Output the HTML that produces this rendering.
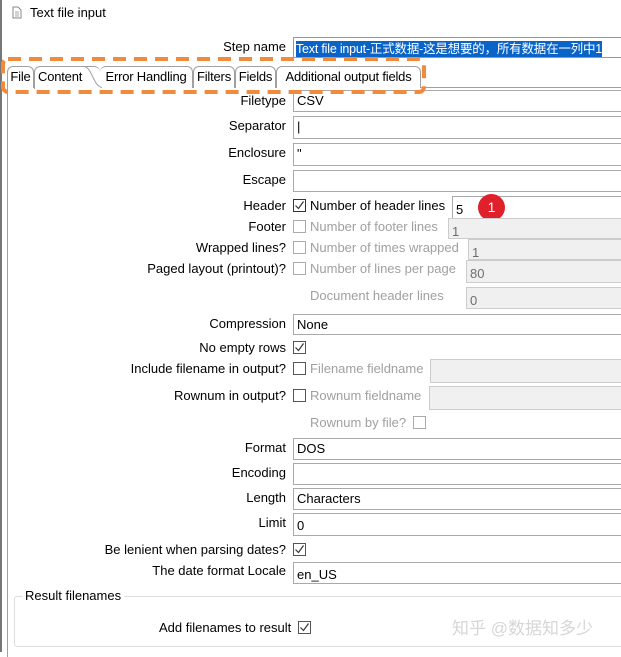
<!DOCTYPE html>
<html><head><meta charset="utf-8"><style>
*{margin:0;padding:0;box-sizing:border-box}
body{width:621px;height:652px;background:#fff;position:relative;overflow:hidden;font-family:"Liberation Sans","Noto Sans CJK SC",sans-serif;font-size:13px;color:#000}
.a{position:absolute;white-space:nowrap}
.l{position:absolute;right:335px;white-space:nowrap;text-align:right;margin-top:1px}
.in{position:absolute;border:1px solid #a9a9a9;background:#fff;padding-left:3px;line-height:19px;white-space:nowrap;right:-2px}
.dis{background:#f0f0f0;border-color:#ccc;color:#6d6d6d}
.cb{position:absolute;width:13px;height:13px;border:1px solid #333;background:#fff}
.cb.g{border-color:#aaa}
.g2{color:#a0a0a0}
.tab{position:absolute;top:66px;height:22px;border:1px solid #a0a0a0;border-bottom:none;border-radius:6px 6px 0 0;line-height:20px;background:#fff;text-align:center;letter-spacing:-0.2px}
</style></head><body>
<div class="a" style="left:0;top:0;width:2px;height:652px;background:#777"></div>
<svg class="a" style="left:11px;top:6px" width="12" height="14"><path d="M2 1h5l3 3v8H2z" fill="#fff" stroke="#888"/><path d="M4 6h4M4 8h4M4 10h4" stroke="#aaa"/></svg>
<div class="a" style="left:30px;top:5px">Text file input</div>
<div class="l" style="top:38px">Step name</div>
<div class="in" style="left:293px;top:37px;height:21px;border-color:#7a9ec0;padding:1px 2px 0 2px"><span style="background:#0a64c8;color:#fff;line-height:16px;display:inline-block;font-size:12.5px;letter-spacing:-0.2px">Text file input-正式数据-这是想要的，所有数据在一列中1</span></div>
<!-- tab panel -->
<div class="a" style="left:7px;top:87px;width:620px;height:570px;border-left:1px solid #a0a0a0;border-top:1px solid #a0a0a0"></div>
<div class="tab" style="left:7px;width:27px">File</div>
<div class="tab" style="left:34px;width:66px;border-right:none;z-index:2;text-align:left;padding-left:3px;height:23px">Content</div>
<svg class="a" style="left:84px;top:66px;z-index:3" width="18" height="23"><path d="M0 0.5 C8 1 9 20 18 21.5" fill="none" stroke="#a0a0a0"/></svg>
<div class="tab" style="left:100px;width:93px;border-left:none">Error Handling</div>
<div class="tab" style="left:193px;width:42px">Filters</div>
<div class="tab" style="left:235px;width:41px">Fields</div>
<div class="tab" style="left:276px;width:145px">Additional output fields</div>
<svg class="a" style="left:0;top:55px;z-index:5" width="430" height="42"><rect x="3" y="4" width="421" height="33" rx="5" fill="none" stroke="#f08a3c" stroke-width="4" stroke-dasharray="13,8"/></svg>

<div class="l" style="top:92px">Filetype</div><div class="in" style="left:293px;top:90px;height:22px">CSV</div>
<div class="l" style="top:117px">Separator</div><div class="in" style="left:293px;top:116px;height:23px">|</div>
<div class="l" style="top:144px">Enclosure</div><div class="in" style="left:293px;top:143px;height:23px">"</div>
<div class="l" style="top:171px">Escape</div><div class="in" style="left:293px;top:170px;height:22px"></div>
<div class="l" style="top:197px">Header</div>
<div class="cb" style="left:293px;top:199px"><svg width="11" height="11" class="a"><path d="M1.5 5.5l3 3 5-7" fill="none" stroke="#333" stroke-width="1.2"/></svg></div>
<div class="a" style="left:310px;top:198px">Number of header lines</div>
<div class="in" style="left:452px;top:196px;height:23px;padding-top:3px">5</div>
<div class="a" style="left:478px;top:194px;width:27px;height:27px;border-radius:50%;background:#e0202a;color:#fff;text-align:center;line-height:27px;font-size:14px">1</div>
<div class="l" style="top:218px">Footer</div><div class="cb g" style="left:293px;top:220px"></div>
<div class="a g2" style="left:310px;top:219px">Number of footer lines</div>
<div class="in dis" style="left:448px;top:218px;height:21px;padding-top:3px">1</div>
<div class="l" style="top:239px">Wrapped lines?</div><div class="cb g" style="left:293px;top:241px"></div>
<div class="a g2" style="left:310px;top:240px">Number of times wrapped</div>
<div class="in dis" style="left:468px;top:239px;height:21px;padding-top:3px">1</div>
<div class="l" style="top:260px">Paged layout (printout)?</div><div class="cb g" style="left:293px;top:262px"></div>
<div class="a g2" style="left:310px;top:261px">Number of lines per page</div>
<div class="in dis" style="left:466px;top:260px;height:23px;padding-top:3px">80</div>
<div class="a g2" style="left:310px;top:288px">Document header lines</div>
<div class="in dis" style="left:466px;top:287px;height:22px;padding-top:3px">0</div>
<div class="l" style="top:315px">Compression</div><div class="in" style="left:293px;top:314px;height:21px">None</div>
<div class="l" style="top:339px">No empty rows</div>
<div class="cb" style="left:293px;top:341px;border-color:#555"><svg width="11" height="11" class="a"><path d="M1.5 5.5l3 3 5-7" fill="none" stroke="#333" stroke-width="1.2"/></svg></div>
<div class="l" style="top:360px">Include filename in output?</div><div class="cb" style="left:293px;top:362px;border-color:#555"></div>
<div class="a g2" style="left:310px;top:361px">Filename fieldname</div>
<div class="in dis" style="left:430px;top:359px;height:24px"></div>
<div class="l" style="top:387px">Rownum in output?</div><div class="cb" style="left:293px;top:389px;border-color:#555"></div>
<div class="a g2" style="left:310px;top:388px">Rownum fieldname</div>
<div class="in dis" style="left:429px;top:386px;height:24px"></div>
<div class="a g2" style="left:310px;top:415px">Rownum by file?</div><div class="cb g" style="left:413px;top:416px"></div>
<div class="l" style="top:439px">Format</div><div class="in" style="left:293px;top:438px;height:22px">DOS</div>
<div class="l" style="top:464px">Encoding</div><div class="in" style="left:293px;top:463px;height:22px"></div>
<div class="l" style="top:489px">Length</div><div class="in" style="left:293px;top:488px;height:22px">Characters</div>
<div class="l" style="top:514px">Limit</div><div class="in" style="left:293px;top:513px;height:23px;padding-top:2px">0</div>
<div class="l" style="top:541px">Be lenient when parsing dates?</div>
<div class="cb" style="left:293px;top:543px;border-color:#555"><svg width="11" height="11" class="a"><path d="M1.5 5.5l3 3 5-7" fill="none" stroke="#333" stroke-width="1.2"/></svg></div>
<div class="l" style="top:562px">The date format Locale</div><div class="in" style="left:293px;top:562px;height:22px;padding-top:2px">en_US</div>
<div class="a" style="left:14px;top:596px;width:620px;height:51px;border:1px solid #ddd;border-radius:3px"></div>
<div class="a" style="left:22px;top:588px;background:#fff;padding:0 3px">Result filenames</div>
<div class="a" style="left:159px;top:620px">Add filenames to result</div>
<div class="cb" style="left:298px;top:621px;border-color:#555"><svg width="11" height="11" class="a"><path d="M1.5 5.5l3 3 5-7" fill="none" stroke="#333" stroke-width="1.2"/></svg></div>
<div class="a" style="left:452px;top:614px;font-size:17px;color:#d6d6d6">知乎 @数据知多少</div>
</body></html>
